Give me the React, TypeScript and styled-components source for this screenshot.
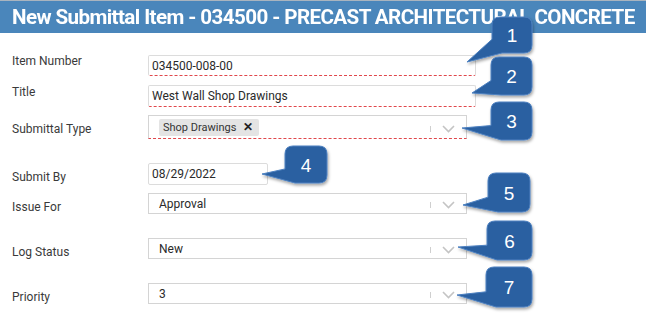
import styled, { createGlobalStyle } from "styled-components";

const GlobalStyle = createGlobalStyle`
    body {
        margin: 0;
        background: #ffffff;
        font-family: Roboto, "Liberation Sans", Arial, sans-serif;
    }
`;

const Page = styled.div`
    position: relative;
    width: 646px;
    height: 319px;
    overflow: hidden;
    background: #ffffff;
`;

const Header = styled.div`
    height: 32px;
    border-top: 1px solid #a9b4bf;
    background-color: #4a86bb;
    display: flex;
    align-items: center;
    padding-left: 12px;
`;

const HeaderTitle = styled.h1`
    margin: 0;
    color: #ffffff;
    font-family: Roboto, "Liberation Sans", sans-serif;
    font-weight: 700;
    font-size: 21px;
    letter-spacing: -0.6px;
    white-space: nowrap;
    transform-origin: left center;
    transform: scaleX(0.98);
`;

const Form = styled.div`
    padding-top: 22px;
`;

const Row = styled.div<{ $gap: number }>`
    display: flex;
    align-items: flex-start;
    margin-top: ${(p) => p.$gap}px;
`;

const Label = styled.label<{ $offset: number }>`
    width: 136px;
    padding-left: 12px;
    padding-top: ${(p) => Math.max(p.$offset, 0)}px;
    margin-top: ${(p) => Math.min(p.$offset, 0)}px;
    font-size: 12px;
    line-height: 14px;
    color: #3a3a3a;
`;

const TextBox = styled.div<{ $width: number; $required?: boolean; $height: number }>`
    box-sizing: border-box;
    width: ${(p) => p.$width}px;
    height: ${(p) => p.$height}px;
    border: 1px solid #dcdcdc;
    border-radius: 2px;
    border-bottom: ${(p) => (p.$required ? "1px dashed #e0474c" : "1px solid #dcdcdc")};
    display: flex;
    align-items: center;
    padding-left: 3px;
    font-size: 12px;
    color: #2a2a2a;
`;

const Select = styled.div<{ $required?: boolean; $height: number }>`
    box-sizing: border-box;
    width: 319px;
    height: ${(p) => p.$height}px;
    border: 1px solid #d4d4d4;
    border-bottom: ${(p) => (p.$required ? "1px dashed #e0474c" : "1px solid #d4d4d4")};
    display: flex;
    align-items: center;
    padding-left: 10px;
    font-size: 12px;
    color: #2a2a2a;
`;

const SelectValue = styled.span`
    flex: 1;
    display: flex;
    align-items: center;
`;

const Chip = styled.span`
    display: inline-flex;
    align-items: center;
    height: 17px;
    padding: 0 6px 0 4px;
    background: #e4e4e4;
    border-radius: 2px;
    font-size: 11px;
    color: #333333;
`;

const ChipClose = styled.span`
    margin-left: 7px;
    font-weight: 700;
    font-size: 12px;
    color: #222222;
`;

const Separator = styled.span`
    width: 1px;
    height: 6px;
    background: #cfcfcf;
    margin-top: 3px;
`;

const Chevron = styled.svg`
    width: 13px;
    height: 8px;
    margin: 3px 11px 0 11px;
`;

const Overlay = styled.svg`
    position: absolute;
    left: 0;
    top: 0;
    width: 646px;
    height: 319px;
    pointer-events: none;
`;

type CalloutSpec = { n: number; x: number; y: number; w: number; h: number; tx: number; ty: number };

const callouts: CalloutSpec[] = [
    { n: 1, x: 492, y: 17, w: 40, h: 36, tx: 467, ty: 62 },
    { n: 2, x: 491, y: 57, w: 41, h: 38, tx: 472, ty: 93 },
    { n: 3, x: 491, y: 102, w: 41, h: 38, tx: 462, ty: 128 },
    { n: 4, x: 285, y: 146, w: 42, h: 37, tx: 262, ty: 174 },
    { n: 5, x: 488, y: 173, w: 42, h: 39, tx: 463, ty: 205 },
    { n: 6, x: 487, y: 221, w: 45, h: 39, tx: 458, ty: 247 },
    { n: 7, x: 486, y: 267, w: 46, h: 40, tx: 457, ty: 295 },
];

function calloutPath({ x, y, w, h, tx, ty }: CalloutSpec) {
    const r = 8;
    return `M${x + r},${y} H${x + w - r} Q${x + w},${y} ${x + w},${y + r} V${y + h - r} Q${x + w},${y + h} ${x + w - r},${y + h} H${x + 10} L${tx},${ty} L${x},${y + h * 0.62} V${y + r} Q${x},${y} ${x + r},${y} Z`;
}

function DropArrow() {
    return (
        <>
            <Separator />
            <Chevron viewBox="0 0 13 8">
                <path d="M1 1 L6.5 6.5 L12 1" fill="none" stroke="#c4c4c4" strokeWidth="1.6" />
            </Chevron>
        </>
    );
}

export default function App() {
    return (
        <Page>
            <GlobalStyle />
            <Header>
                <HeaderTitle>New Submittal Item - 034500 - PRECAST ARCHITECTURAL CONCRETE</HeaderTitle>
            </Header>

            <Form>
                <Row $gap={0}>
                    <Label $offset={-1}>Item Number</Label>
                    <TextBox $width={328} $height={21} $required>034500-008-00</TextBox>
                </Row>
                <Row $gap={9}>
                    <Label $offset={0}>Title</Label>
                    <TextBox $width={328} $height={22} $required>West Wall Shop Drawings</TextBox>
                </Row>
                <Row $gap={8}>
                    <Label $offset={7}>Submittal Type</Label>
                    <Select $height={24} $required>
                        <SelectValue>
                            <Chip>
                                Shop Drawings
                                <ChipClose>✕</ChipClose>
                            </Chip>
                        </SelectValue>
                        <DropArrow />
                    </Select>
                </Row>
                <Row $gap={24}>
                    <Label $offset={7}>Submit By</Label>
                    <TextBox $width={120} $height={22}>08/29/2022</TextBox>
                </Row>
                <Row $gap={8}>
                    <Label $offset={7}>Issue For</Label>
                    <Select $height={21}>
                        <SelectValue>Approval</SelectValue>
                        <DropArrow />
                    </Select>
                </Row>
                <Row $gap={24}>
                    <Label $offset={7}>Log Status</Label>
                    <Select $height={21}>
                        <SelectValue>New</SelectValue>
                        <DropArrow />
                    </Select>
                </Row>
                <Row $gap={24}>
                    <Label $offset={7}>Priority</Label>
                    <Select $height={21}>
                        <SelectValue>3</SelectValue>
                        <DropArrow />
                    </Select>
                </Row>
            </Form>

            <Overlay viewBox="0 0 646 319">
                <defs>
                    <filter id="shadow" x="-30%" y="-30%" width="160%" height="160%">
                        <feDropShadow dx="1" dy="2" stdDeviation="1.5" floodColor="#000" floodOpacity="0.35" />
                    </filter>
                </defs>
                {callouts.map((c) => (
                    <g key={c.n}>
                        <path d={calloutPath(c)} fill="#2c61a1" stroke="#4c80c0" strokeWidth="1" filter="url(#shadow)" />
                        <text
                            x={c.x + c.w / 2}
                            y={c.y + c.h / 2 + 7}
                            textAnchor="middle"
                            fill="#ffffff"
                            fontFamily="'Liberation Sans', Arial, sans-serif"
                            fontSize="19"
                        >
                            {c.n}
                        </text>
                    </g>
                ))}
            </Overlay>
        </Page>
    );
}
